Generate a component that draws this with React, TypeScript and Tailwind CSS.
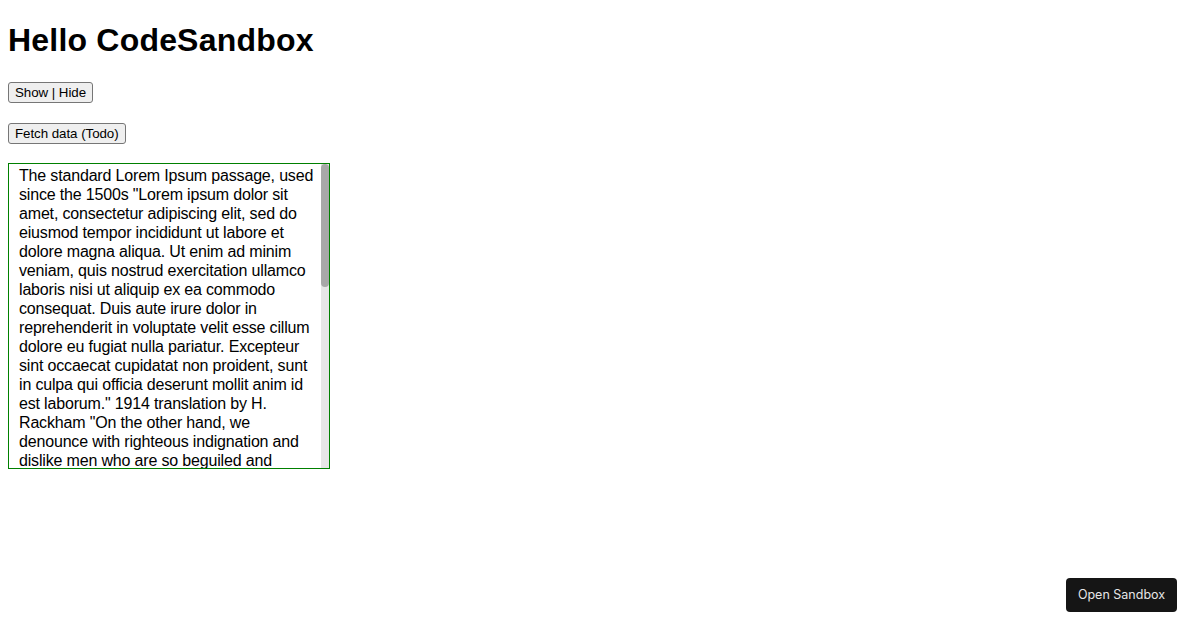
const passage =
  'The standard Lorem Ipsum passage, used since the 1500s "Lorem ipsum dolor sit amet, consectetur adipiscing elit, sed do eiusmod tempor incididunt ut labore et dolore magna aliqua. Ut enim ad minim veniam, quis nostrud exercitation ullamco laboris nisi ut aliquip ex ea commodo consequat. Duis aute irure dolor in reprehenderit in voluptate velit esse cillum dolore eu fugiat nulla pariatur. Excepteur sint occaecat cupidatat non proident, sunt in culpa qui officia deserunt mollit anim id est laborum." 1914 translation by H. Rackham "On the other hand, we denounce with righteous indignation and dislike men who are so beguiled and demoralized by the charms of pleasure of the moment, so blinded by desire, that they cannot foresee the pain and trouble that are bound to ensue; and equal blame belongs to those who fail in their duty through weakness of will, which is the same as saying through shrinking from toil and pain. These cases are perfectly simple and easy to distinguish. In a free hour, when our power of choice is untrammelled and when nothing prevents our being able to do what we like best, every pleasure is to be welcomed and every pain avoided. But in certain circumstances and owing to the claims of duty or the obligations of business it will frequently occur that pleasures have to be repudiated and annoyances accepted. The wise man therefore always holds in these matters to this principle of selection: he rejects pleasures to secure other greater pleasures, or else he endures pains to avoid worse pains."'

function App() {
  return (
    <div className="min-h-screen bg-white px-2 text-black font-['Liberation_Sans',Arial,sans-serif]">
      <h1 className="pt-[22px] text-[32px] leading-[37px] font-bold tracking-[0.2px]">Hello CodeSandbox</h1>

      <div className="mt-[23px] flex flex-col items-start gap-[20px]">
        <button className="h-[21px] rounded-[3px] border border-[#767676] bg-[#efefef] px-[6px] text-[13.33px] leading-[15px] tracking-[-0.05px] text-black">
          Show | Hide
        </button>
        <button className="h-[21px] rounded-[3px] border border-[#767676] bg-[#efefef] px-[6px] text-[13.33px] leading-[15px] tracking-[-0.05px] text-black">
          Fetch data (Todo)
        </button>
      </div>

      {/* text panel with its scrollbar */}
      <div className="mt-[19px] box-border flex h-[306px] w-[322px] border border-[#008000]">
        <div className="flex-1 overflow-hidden pt-[2px] pr-[4px] pl-[10px] text-[16px] leading-[19px] tracking-[-0.17px]">
          {passage}
        </div>
        <div className="w-[8px] bg-[#e6e6e6]">
          <div className="h-[123px] rounded-[4px] bg-[#a8a8a8]" />
        </div>
      </div>

      <button className="fixed right-[23px] bottom-[18px] h-[34px] w-[111px] rounded-[4px] bg-[#151515] text-[12.5px] text-[#e6e6e6] font-['Inter',sans-serif]">
        Open Sandbox
      </button>
    </div>
  )
}

export default App
